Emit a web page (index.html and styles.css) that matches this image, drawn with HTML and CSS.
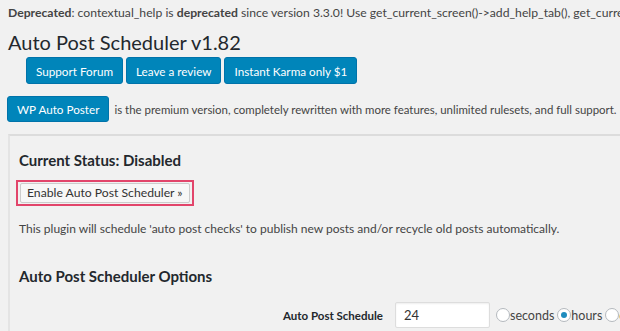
FILE: index.html
```html
<!DOCTYPE html>
<html>
<head>
<meta charset="utf-8">
<link rel="stylesheet" href="styles.css">
</head>
<body>
<div class="page">
  <div class="deprecated"><b>Deprecated</b>: contextual_help is <b>deprecated</b> since version 3.3.0! Use get_current_screen()-&gt;add_help_tab(), get_current_screen()-&gt;remove_help_tab() instead.</div>
  <h1 class="title">Auto Post Scheduler v1.82</h1>
  <div class="links">
    <a class="btn-primary">Support Forum</a>
    <a class="btn-primary">Leave a review</a>
    <a class="btn-primary">Instant Karma only $1</a>
  </div>
  <div class="promo">
    <a class="btn-primary">WP Auto Poster</a>
    <span class="promo-text">is the premium version, completely rewritten with more features, unlimited rulesets, and full support.</span>
  </div>
  <div class="box">
    <h2 class="heading">Current Status: Disabled</h2>
    <div class="enable-wrap"><button class="btn-secondary">Enable Auto Post Scheduler »</button></div>
    <p class="desc">This plugin will schedule 'auto post checks' to publish new posts and/or recycle old posts automatically.</p>
    <h2 class="heading options">Auto Post Scheduler Options</h2>
    <div class="form-row">
      <label class="form-label">Auto Post Schedule</label>
      <input class="text-input" type="text" value="24">
      <span class="radio-group">
        <span class="radio"></span><span class="radio-label">seconds</span>
        <span class="radio checked"></span><span class="radio-label">hours</span>
        <span class="radio"></span><span class="radio-label">days</span>
      </span>
    </div>
  </div>
</div>
</body>
</html>
```
FILE: styles.css
```css
html, body {
  margin: 0;
  padding: 0;
  background: #f1f1f1;
  overflow: hidden;
}
.page {
  width: 700px;
  height: 331px;
  overflow: hidden;
  font-family: Lato, "Open Sans", sans-serif;
  font-size: 12px;
  color: #444;
}
.deprecated {
  white-space: nowrap;
  padding: 3px 0 0 8px;
  line-height: 20px;
  font-size: 12.2px;
  color: #444;
}
.deprecated b { font-weight: 700; }
.title {
  margin: 5px 0 0 8px;
  font-size: 20px;
  font-weight: 400;
  line-height: 29px;
  color: #23282d;
}
.links {
  display: flex;
  gap: 3px;
  margin: 0 0 0 26px;
}
.btn-primary {
  display: inline-flex;
  align-items: center;
  height: 27px;
  box-sizing: border-box;
  padding: 0 9px;
  background: #0085ba;
  border: 1px solid #0073aa;
  border-radius: 3px;
  color: #fff;
  font-size: 11.7px;
  white-space: nowrap;
}
.promo {
  display: flex;
  align-items: center;
  gap: 5px;
  margin: 12px 0 0 7px;
  white-space: nowrap;
}
.promo .btn-primary { height: 26px; padding: 0 9px; }
.promo-text { font-size: 11.45px; }
.box {
  margin: 12px 0 0 8px;
  border: 2px solid #e4e4e4;
  border-top-color: #dcdcdc;
  padding: 14px 10px 20px 9px;
  height: 300px;
}
.heading {
  margin: 0;
  font-size: 15px;
  font-weight: 700;
  line-height: 20px;
  color: #23282d;
}
.enable-wrap {
  display: inline-block;
  margin: 10px 0 0 -3px;
  border: 2px solid #e2456b;
  padding: 1px 2px;
}
.btn-secondary {
  font-family: Lato, "Open Sans", sans-serif;
  font-size: 12.2px;
  color: #333;
  background: #f7f7f7;
  border: 1px solid #ccc;
  border-radius: 2px;
  height: 20px;
  padding: 0 6px;
  line-height: 18px;
}
.desc {
  margin: 14px 0 0;
  font-size: 12px;
  line-height: 18px;
}
.options { margin-top: 28px; }
.form-row {
  display: flex;
  align-items: center;
  margin-top: 16px;
}
.form-label {
  width: 364px;
  text-align: right;
  font-weight: 700;
  font-size: 11.5px;
  color: #23282d;
  margin-right: 12px;
}
.text-input {
  width: 95px;
  height: 26px;
  box-sizing: border-box;
  border: 1px solid #ddd;
  border-radius: 2px;
  background: #fff;
  font-family: Lato, "Open Sans", sans-serif;
  font-size: 13px;
  color: #333;
  padding: 0 8px;
  box-shadow: inset 0 1px 2px rgba(0,0,0,0.07);
}
.radio-group {
  display: flex;
  align-items: center;
  margin-left: 6px;
  white-space: nowrap;
}
.radio {
  width: 14px;
  height: 14px;
  box-sizing: border-box;
  border: 1px solid #b4b9be;
  border-radius: 50%;
  background: #fff;
  position: relative;
}
.radio.checked::after {
  content: "";
  position: absolute;
  left: 3px;
  top: 3px;
  width: 6px;
  height: 6px;
  border-radius: 50%;
  background: #1e8cbe;
}
.radio-label {
  font-size: 12.5px;
  margin: 0 3px 0 0;
}
```
